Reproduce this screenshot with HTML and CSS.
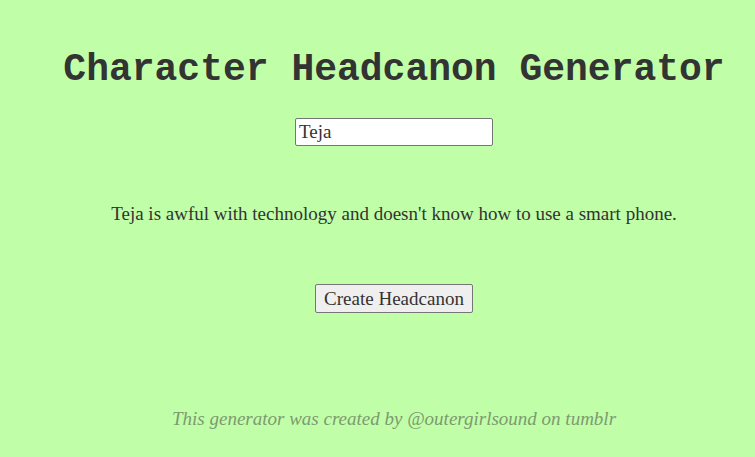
FILE: index.html
```html
<!DOCTYPE html>
<html>
<head>
<meta charset="utf-8">
<link rel="stylesheet" href="styles.css">
</head>
<body>
<main class="page">
  <h1 class="title">Character Headcanon Generator</h1>
  <input class="name-input" type="text" value="Teja">
  <p class="headcanon">Teja is awful with technology and doesn't know how to use a smart phone.</p>
  <button class="create-btn">Create Headcanon</button>
  <p class="credit">This generator was created by @outergirlsound on tumblr</p>
</main>
</body>
</html>
```
FILE: styles.css
```css
html, body {
  margin: 0;
  background: #c0ffa8;
}

.page {
  display: flex;
  flex-direction: column;
  align-items: center;
  padding-left: 33px;
  font-family: "Liberation Serif", serif;
  color: #333;
}

.title {
  margin: 48px 0 0;
  font-family: "Liberation Mono", monospace;
  font-weight: bold;
  font-size: 38px;
  line-height: 44px;
  color: #333;
  white-space: nowrap;
}

.name-input {
  margin-top: 26px;
  width: 198px;
  height: 28px;
  box-sizing: border-box;
  padding: 0 3px;
  font-family: "Liberation Serif", serif;
  font-size: 19px;
  color: #333;
  border: 1px solid #767676;
  border-radius: 2px;
  background: #fff;
}

.headcanon {
  margin: 56px 0 0;
  font-size: 19px;
  line-height: 24px;
}

.create-btn {
  margin-top: 58px;
  width: 158px;
  height: 29px;
  font-family: "Liberation Serif", serif;
  font-size: 19px;
  color: #333;
  background: #efefef;
  border: 1px solid #767676;
  border-radius: 2px;
  padding: 0;
}

.credit {
  margin: 94px 0 0;
  font-style: italic;
  font-size: 19px;
  line-height: 24px;
  color: #7d9a70;
}
```
